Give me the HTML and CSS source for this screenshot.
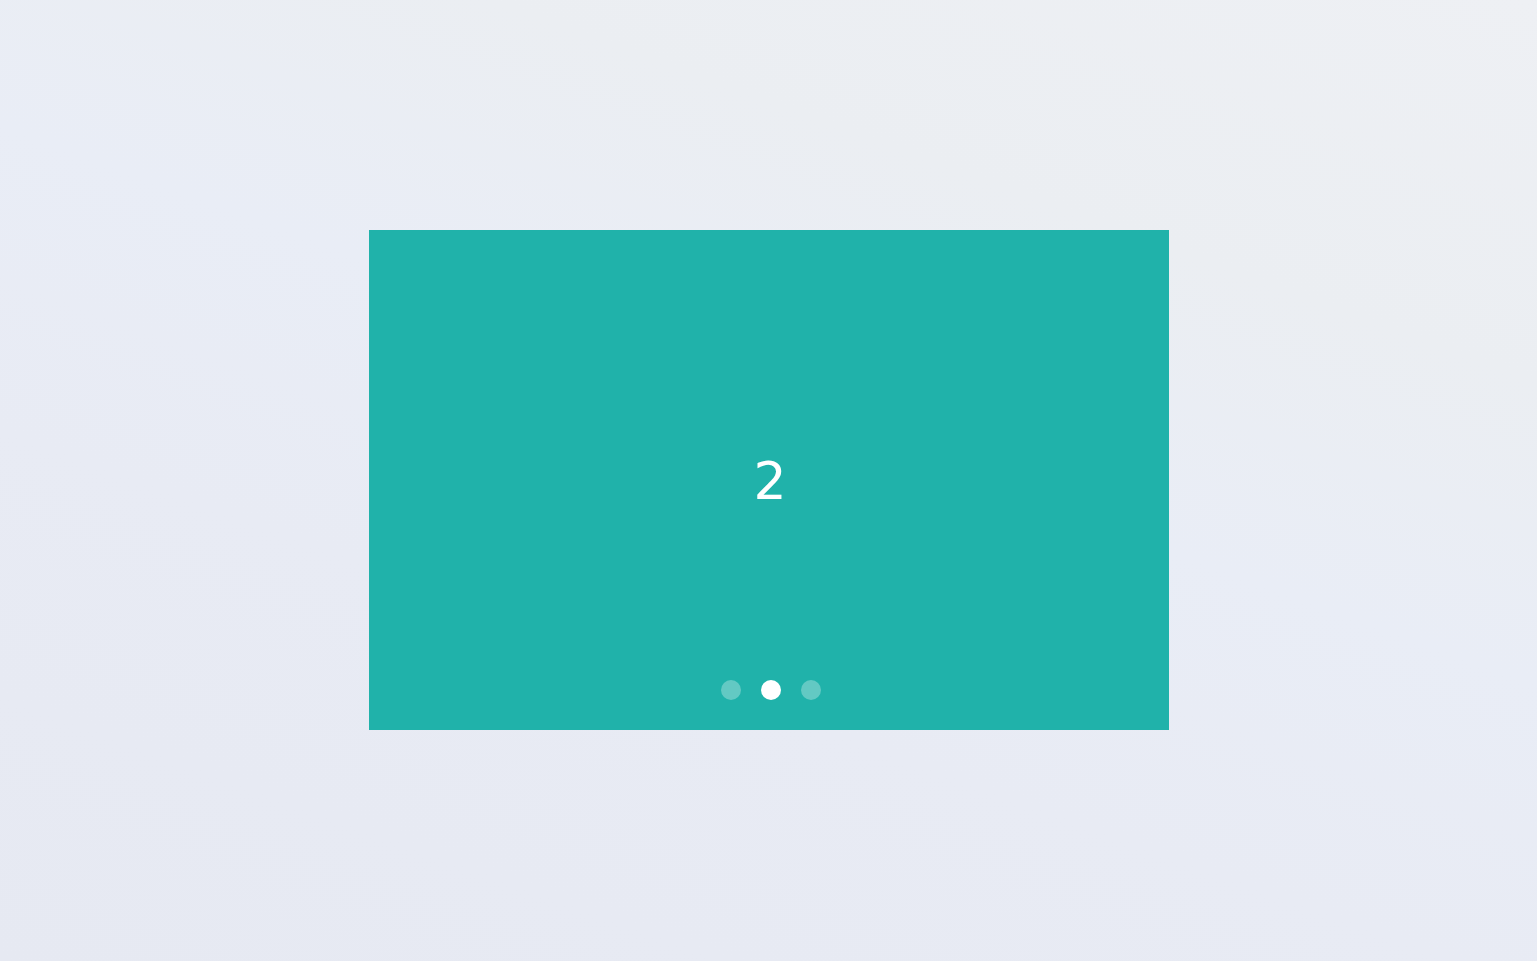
FILE: index.html
```html
<!DOCTYPE html>
<html>
<head>
<meta charset="utf-8">
<link rel="stylesheet" href="styles.css">
</head>
<body>
<div class="stage">
  <div class="carousel">
    <div class="slide"><span class="slide-num">2</span></div>
    <div class="dots">
      <span class="dot"></span>
      <span class="dot active"></span>
      <span class="dot"></span>
    </div>
  </div>
</div>
</body>
</html>
```
FILE: styles.css
```css
html, body {
  margin: 0;
  padding: 0;
  height: 100%;
}
body {
  background: linear-gradient(20deg, #e6e9f2 0%, #e8ebf4 35%, #e9edf6 55%, #ebeef2 75%, #eef0f4 100%);
  font-family: "DejaVu Sans", sans-serif;
}
.stage {
  height: 100vh;
  display: flex;
  align-items: center;
  justify-content: center;
}
.carousel {
  position: relative;
  width: 800px;
  height: 500px;
  margin-bottom: 1px;
  background: #20b2aa;
  display: flex;
  flex-direction: column;
}
.slide {
  flex: 1;
  display: flex;
  align-items: center;
  justify-content: center;
  padding-left: 3px;
  color: #ffffff;
}
.slide-num {
  font-size: 52px;
  line-height: 1;
  margin-top: 2px;
}
.dots {
  position: absolute;
  left: 0;
  right: 0;
  bottom: 30px;
  padding-left: 4px;
  display: flex;
  justify-content: center;
  gap: 20px;
}
.dot {
  width: 20px;
  height: 20px;
  border-radius: 50%;
  background: rgba(255, 255, 255, 0.3);
}
.dot.active {
  background: #ffffff;
}
```
